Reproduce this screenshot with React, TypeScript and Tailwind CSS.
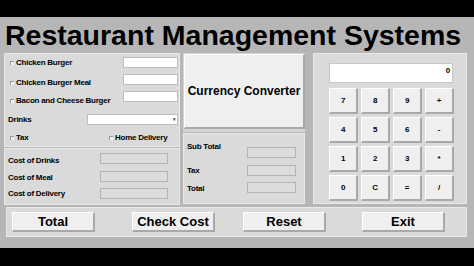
import React from "react";

const font = { fontFamily: '"Liberation Sans", Arial, sans-serif' };

function Check() {
  return (
    <span className="inline-block w-[4px] h-[4px] mr-[2px] bg-[#f4f4f4] border-t border-l border-[#9a9a9a]" />
  );
}

function Field({ w, disabled }: { w: string; disabled?: boolean }) {
  return (
    <div
      className={`${w} h-[11px] border ${
        disabled ? "bg-[#dcdcdc] border-[#b4b4b4]" : "bg-white border-[#bdbdbd]"
      }`}
    />
  );
}

function Raised({ children, className }: { children: React.ReactNode; className: string }) {
  return (
    <button
      type="button"
      className={`flex items-center justify-center bg-[#efefef] border-t border-l border-white border-b-2 border-r-2 border-b-[#a9a9a9] border-r-[#a9a9a9] font-bold text-black ${className}`}
    >
      {children}
    </button>
  );
}

const keys = ["7", "8", "9", "+", "4", "5", "6", "-", "1", "2", "3", "*", "0", "C", "=", "/"];

export default function App() {
  return (
    <div className="w-[474px] h-[266px] bg-black flex flex-col overflow-hidden" style={font}>
      <div className="h-[17px] shrink-0" />
      <div className="h-[231px] bg-[#b6b6b6] flex flex-col">
        <div className="h-[36px] pl-[5px] flex items-center text-[28.5px] font-bold leading-none text-black">
          Restaurant Management Systems
        </div>

        <div className="flex h-[152px] pl-[4px] text-[8px] tracking-[-0.25px] font-bold text-black">
          {/* left column */}
          <div className="w-[176px] flex flex-col gap-[1px]">
            <div className="h-[94px] bg-[#dadada] border border-[#e9e9e9] flex flex-col pt-[3px] pr-[1px]">
              <div className="h-[11px] flex items-center justify-between">
                <span className="flex items-center pl-[5px]"><Check />Chicken Burger</span>
                <Field w="w-[55px]" />
              </div>
              <div className="h-[11px] mt-[6px] flex items-center justify-between">
                <span className="flex items-center pl-[5px] mt-[6px]"><Check />Chicken Burger Meal</span>
                <Field w="w-[55px]" />
              </div>
              <div className="h-[11px] mt-[6px] flex items-center justify-between">
                <span className="flex items-center pl-[5px] mt-[8px]"><Check />Bacon and Cheese Burger</span>
                <Field w="w-[55px]" />
              </div>
              <div className="h-[11px] mt-[12px] flex items-center justify-between">
                <span className="pl-[3px]">Drinks</span>
                <div className="w-[91px] h-[11px] bg-white border border-[#bdbdbd] flex justify-end items-center pr-[1px]">
                  <span className="text-[5px] leading-none text-[#555]">▾</span>
                </div>
              </div>
              <div className="h-[12px] mt-[7px] flex items-center">
                <span className="flex items-center pl-[5px] w-[104px]"><Check />Tax</span>
                <span className="flex items-center"><Check />Home Delivery</span>
              </div>
            </div>
            <div className="h-[57px] bg-[#dadada] border border-[#e9e9e9] flex flex-col pt-[4px] pl-[3px]">
              <div className="h-[11px] flex items-center justify-between pr-[11px]">
                <span className="mt-[4px]">Cost of Drinks</span>
                <Field w="w-[68px]" disabled />
              </div>
              <div className="h-[11px] mt-[7px] flex items-center justify-between pr-[11px]">
                <span className="mt-[2px]">Cost of Meal</span>
                <Field w="w-[68px]" disabled />
              </div>
              <div className="h-[11px] mt-[6px] flex items-center justify-between pr-[11px]">
                <span className="mt-[1px]">Cost of Delivery</span>
                <Field w="w-[68px]" disabled />
              </div>
            </div>
          </div>

          {/* middle column */}
          <div className="w-[122px] ml-[3px] flex flex-col">
            <div className="h-[79px] bg-[#d4d4d4] pt-[1px] pl-[1px]">
              <Raised className="w-[121px] h-[75px] text-[12px] tracking-normal">Currency Converter</Raised>
            </div>
            <div className="h-[71px] mt-[1px] bg-[#dadada] border border-[#e9e9e9] flex flex-col pl-[3px] pt-[13px]">
              <div className="h-[11px] flex items-center justify-between pr-[8px]">
                <span className="-mt-[11px]">Sub Total</span>
                <Field w="w-[49px]" disabled />
              </div>
              <div className="h-[11px] mt-[7px] flex items-center justify-between pr-[8px]">
                <span>Tax</span>
                <Field w="w-[49px]" disabled />
              </div>
              <div className="h-[11px] mt-[6px] flex items-center justify-between pr-[8px]">
                <span className="mt-[3px]">Total</span>
                <Field w="w-[49px]" disabled />
              </div>
            </div>
          </div>

          {/* calculator */}
          <div className="w-[154px] h-[151px] ml-[8px] bg-[#dadada] border border-[#e9e9e9] flex flex-col items-start pl-[15px] pt-[9px]">
            <div className="w-[124px] h-[20px] bg-white border border-[#c8c8c8] flex justify-end pr-[2px] pt-[1px] text-[8px]">
              0
            </div>
            <div className="mt-[5px] grid grid-cols-[repeat(4,29px)] grid-rows-[repeat(4,26px)] gap-x-[3px] gap-y-[3px]">
              {keys.map((k) => (
                <Raised key={k} className="w-[29px] h-[26px] text-[8px]">
                  {k}
                </Raised>
              ))}
            </div>
          </div>
        </div>

        <div className="h-[2px]" />
        <div className="mx-[6px] w-[461px] h-[30px] bg-[#dadada] border border-[#e9e9e9] flex items-center pl-[5px] text-[13px]">
          <Raised className="w-[83px] h-[20px]">Total</Raised>
          <Raised className="w-[83px] h-[20px] ml-[37px]">Check Cost</Raised>
          <Raised className="w-[83px] h-[20px] ml-[28px]">Reset</Raised>
          <Raised className="w-[83px] h-[20px] ml-[36px]">Exit</Raised>
        </div>
      </div>
    </div>
  );
}
